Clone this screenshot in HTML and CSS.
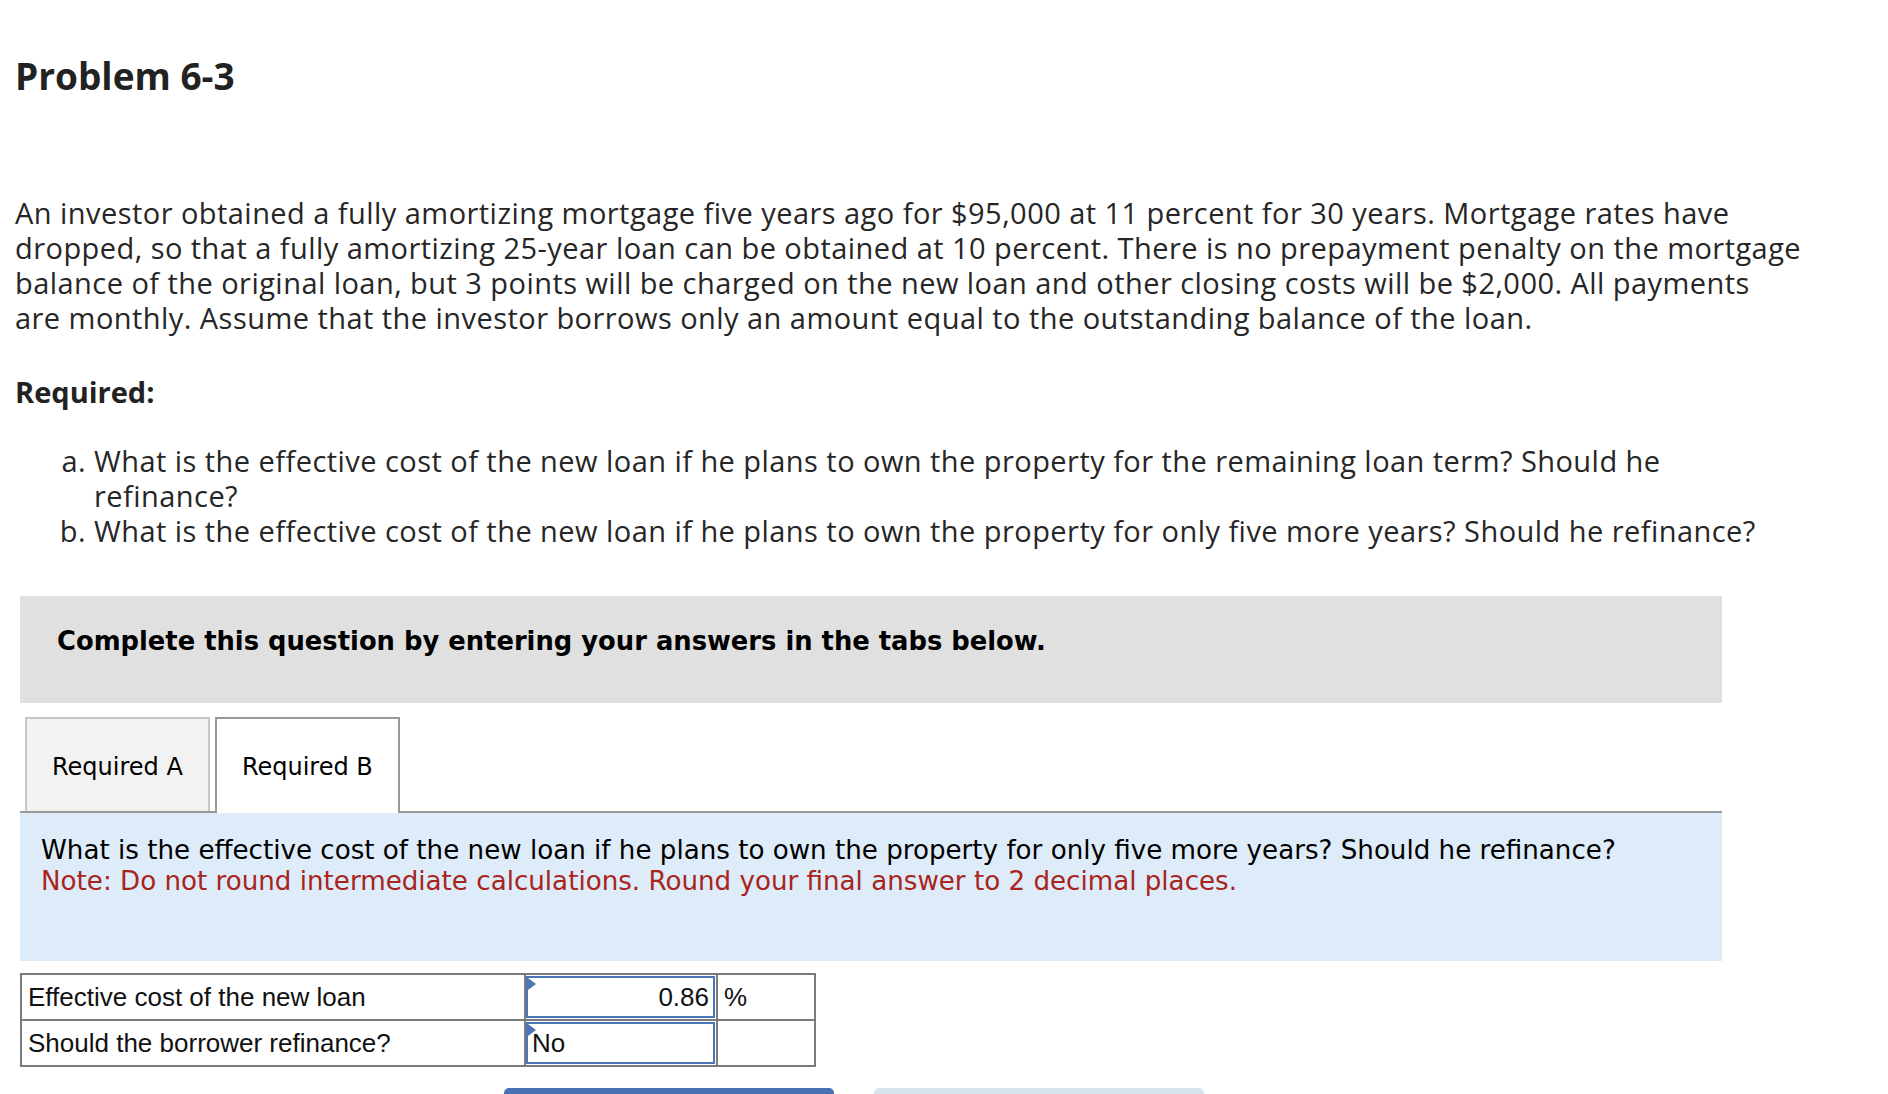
FILE: index.html
```html
<!DOCTYPE html>
<html lang="en">
<head>
<meta charset="utf-8">
<title>Problem 6-3</title>
<link rel="stylesheet" href="styles.css">
</head>
<body>
<div class="page">
  <h1 class="title">Problem 6-3</h1>
  <p class="intro">An investor obtained a fully amortizing mortgage five years ago for $95,000 at 11 percent for 30 years. Mortgage rates have dropped, so that a fully amortizing 25-year loan can be obtained at 10 percent. There is no prepayment penalty on the mortgage balance of the original loan, but 3 points will be charged on the new loan and other closing costs will be $2,000. All payments<br>are monthly. Assume that the investor borrows only an amount equal to the outstanding balance of the loan.</p>
  <p class="req-head">Required:</p>
  <ol class="req-list">
    <li>What is the effective cost of the new loan if he plans to own the property for the remaining loan term? Should he refinance?</li>
    <li>What is the effective cost of the new loan if he plans to own the property for only five more years? Should he refinance?</li>
  </ol>

  <div class="widget">
    <div class="instructions">Complete this question by entering your answers in the tabs below.</div>
    <div class="tabs">
      <div class="tab">Required A</div>
      <div class="tab active">Required B</div>
    </div>
    <div class="panel">
      <p class="question">What is the effective cost of the new loan if he plans to own the property for only five more years? Should he refinance?</p>
      <p class="note">Note: Do not round intermediate calculations. Round your final answer to 2 decimal places.</p>
    </div>
    <table class="answers">
      <tr>
        <td class="label">Effective cost of the new loan</td>
        <td class="entry"><div class="input num">0.86</div></td>
        <td class="unit">%</td>
      </tr>
      <tr>
        <td class="label">Should the borrower refinance?</td>
        <td class="entry"><div class="input">No</div></td>
        <td class="unit"></td>
      </tr>
    </table>
    <div class="buttons">
      <button class="btn btn-prev" aria-label="Required A"></button>
      <button class="btn btn-next" aria-label="Required B"></button>
    </div>
  </div>
</div>
</body>
</html>
```
FILE: styles.css
```css
html, body {
  margin: 0;
  padding: 0;
  background: #ffffff;
}

body {
  color: #262626;
  font-family: "Open Sans", Lato, sans-serif;
}

.page {
  padding-left: 15px;
  width: 1796px;
}

.title {
  margin: 52px 0 0;
  font: 700 37px/48px "Open Sans", sans-serif;
  color: #222222;
}

.intro {
  margin: 95px 0 0;
  font: 400 29px/35px "Open Sans", sans-serif;
  letter-spacing: 0.45px;
}

.req-head {
  margin: 39px 0 0;
  font: 700 29px/35px "Open Sans", sans-serif;
  color: #222222;
}

.req-list {
  margin: 34px 25px 0 0;
  padding-left: 79px;
  list-style: lower-alpha;
  font: 400 29px/35px "Open Sans", sans-serif;
  letter-spacing: 0.45px;
}

.widget {
  margin: 48px 0 0 5px;
  width: 1702px;
}

.instructions {
  background: #e0e0e0;
  padding: 30px 30px 47px 37px;
  font: 700 25.8px/30px "DejaVu Sans", Verdana, sans-serif;
  color: #000000;
}

.tabs {
  display: flex;
  gap: 5px;
  margin-top: 14px;
  padding-left: 5px;
  border-bottom: 2px solid #999999;
}

.tab {
  padding: 33px 25px 29px;
  border: 2px solid #c6c6c6;
  border-bottom: 0;
  background: #f2f2f2;
  font: 400 24px/30px "DejaVu Sans", Verdana, sans-serif;
  color: #000000;
}

.tab.active {
  background: #ffffff;
  border-color: #999999;
  margin-bottom: -2px;
  padding-bottom: 31px;
}

.panel {
  background: #deebf8;
  padding: 22px 21px 64px;
  font: 400 26.15px/31px "DejaVu Sans", Verdana, sans-serif;
  color: #000000;
}

.panel p {
  margin: 0;
}

.panel .note {
  color: #a8241c;
}

.answers {
  margin-top: 12px;
  border-collapse: separate;
  border-spacing: 0;
  border-top: 2px solid #7a7a7a;
  border-left: 2px solid #7a7a7a;
  font: 400 26px "Liberation Sans", Arial, sans-serif;
  color: #111111;
}

.answers td {
  border-right: 2px solid #7a7a7a;
  border-bottom: 2px solid #7a7a7a;
  padding: 0;
}

.answers .label {
  width: 496px;
  padding-left: 6px;
}

.answers .entry {
  width: 189px;
  padding: 1px 1px 1px 0;
}

.answers .unit {
  width: 90px;
  padding-left: 6px;
}

.input {
  position: relative;
  box-sizing: border-box;
  height: 42px;
  border: 2px solid #4a76b8;
  padding: 0 4px;
  line-height: 38px;
}

.input.num {
  text-align: right;
}

.input::before {
  content: "";
  position: absolute;
  top: 0;
  left: 0;
  border-top: 6px solid transparent;
  border-bottom: 6px solid transparent;
  border-left: 8px solid #4a76b8;
}

.buttons {
  display: flex;
  gap: 40px;
  margin-top: 21px;
  padding-left: 484px;
}

.btn {
  width: 330px;
  height: 48px;
  border: 0;
  border-radius: 5px;
}

.btn-prev {
  background: #4672b4;
}

.btn-next {
  background: #d9e3ef;
}
```
